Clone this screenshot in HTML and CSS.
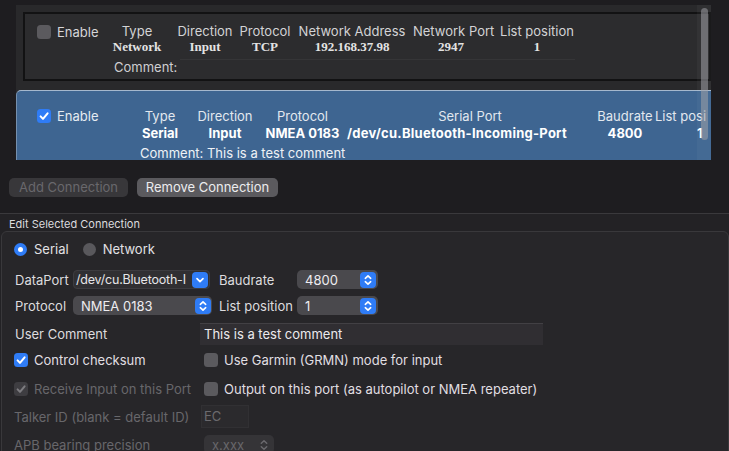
FILE: index.html
```html
<!DOCTYPE html>
<html>
<head>
<meta charset="utf-8">
<link rel="stylesheet" href="styles.css">
</head>
<body>
<div class="top">
  <div class="list">
    <div class="row row-net">
      <div class="line">
        <div class="enable en-net"><span class="cb cb-off"></span><span class="en-label">Enable</span></div>
        <div class="col n1"><div class="hdr">Type</div><div class="val">Network</div></div>
        <div class="col n2"><div class="hdr">Direction</div><div class="val">Input</div></div>
        <div class="col n3"><div class="hdr">Protocol</div><div class="val">TCP</div></div>
        <div class="col n4"><div class="hdr">Network Address</div><div class="val">192.168.37.98</div></div>
        <div class="col n5"><div class="hdr">Network Port</div><div class="val">2947</div></div>
        <div class="col n6"><div class="hdr">List position</div><div class="val">1</div></div>
      </div>
      <div class="underline"></div>
      <div class="comment net-comment">Comment:</div>
    </div>
    <div class="row row-sel">
      <div class="line">
        <div class="enable en-sel"><span class="cb cb-on"><svg viewBox="0 0 14 14" width="14" height="14"><path d="M3.6 7.4 L6 9.9 L10.6 4.3" fill="none" stroke="#fff" stroke-width="2" stroke-linecap="round" stroke-linejoin="round"/></svg></span><span class="en-label">Enable</span></div>
        <div class="col s1"><div class="hdr">Type</div><div class="val">Serial</div></div>
        <div class="col s2"><div class="hdr">Direction</div><div class="val">Input</div></div>
        <div class="col s3"><div class="hdr">Protocol</div><div class="val">NMEA 0183</div></div>
        <div class="col s4"><div class="hdr">Serial Port</div><div class="val">/dev/cu.Bluetooth-Incoming-Port</div></div>
        <div class="col s5"><div class="hdr">Baudrate</div><div class="val">4800</div></div>
        <div class="col s6"><div class="hdr">List posi</div><div class="val">1</div></div>
      </div>
      <div class="comment sel-comment">Comment: This is a test comment</div>
    </div>
    <div class="scroll-track"><div class="scroll-thumb"></div></div>
  </div>
</div>

<div class="buttons">
  <div class="btn btn-add">Add Connection</div>
  <div class="btn btn-remove">Remove Connection</div>
</div>

<div class="sep"></div>

<div class="section">
  <div class="section-title">Edit Selected Connection</div>
  <div class="box">
    <div class="radios">
      <span class="radio radio-on"></span><span class="radio-label">Serial</span>
      <span class="radio radio-off"></span><span class="radio-label">Network</span>
    </div>

    <div class="grid2">
      <div class="lbl">DataPort</div>
      <div class="combo">
        <div class="combo-field">/dev/cu.Bluetooth-I</div>
        <div class="blue-btn"><svg viewBox="0 0 16 16" width="16" height="16"><path d="M5 6.6 L8 9.6 L11 6.6" fill="none" stroke="#fff" stroke-width="1.7" stroke-linecap="round" stroke-linejoin="round"/></svg></div>
      </div>
      <div class="lbl">Baudrate</div>
      <div class="popup pop-small">
        <div class="pop-text">4800</div>
        <div class="blue-btn"><svg viewBox="0 0 16 16" width="16" height="16"><path d="M5.3 6.3 L8 3.8 L10.7 6.3 M5.3 9.7 L8 12.2 L10.7 9.7" fill="none" stroke="#fff" stroke-width="1.6" stroke-linecap="round" stroke-linejoin="round"/></svg></div>
      </div>

      <div class="lbl">Protocol</div>
      <div class="popup pop-proto">
        <div class="pop-text">NMEA 0183</div>
        <div class="blue-btn"><svg viewBox="0 0 16 16" width="16" height="16"><path d="M5.3 6.3 L8 3.8 L10.7 6.3 M5.3 9.7 L8 12.2 L10.7 9.7" fill="none" stroke="#fff" stroke-width="1.6" stroke-linecap="round" stroke-linejoin="round"/></svg></div>
      </div>
      <div class="lbl">List position</div>
      <div class="popup pop-small">
        <div class="pop-text">1</div>
        <div class="blue-btn"><svg viewBox="0 0 16 16" width="16" height="16"><path d="M5.3 6.3 L8 3.8 L10.7 6.3 M5.3 9.7 L8 12.2 L10.7 9.7" fill="none" stroke="#fff" stroke-width="1.6" stroke-linecap="round" stroke-linejoin="round"/></svg></div>
      </div>
    </div>

    <div class="comment-row">
      <div class="lbl lbl-wide">User Comment</div>
      <div class="text-field">This is a test comment</div>
    </div>

    <div class="crow crow-first">
      <div class="citem citem-left"><span class="cb cb-on"><svg viewBox="0 0 14 14" width="14" height="14"><path d="M3.6 7.4 L6 9.9 L10.6 4.3" fill="none" stroke="#fff" stroke-width="2" stroke-linecap="round" stroke-linejoin="round"/></svg></span><span class="clabel">Control checksum</span></div>
      <div class="citem"><span class="cb cb-off"></span><span class="clabel">Use Garmin (GRMN) mode for input</span></div>
    </div>

    <div class="crow crow-second">
      <div class="citem citem-left"><span class="cb cb-dis"><svg viewBox="0 0 14 14" width="14" height="14"><path d="M3.6 7.4 L6 9.9 L10.6 4.3" fill="none" stroke="#7d7c80" stroke-width="2" stroke-linecap="round" stroke-linejoin="round"/></svg></span><span class="clabel dim">Receive Input on this Port</span></div>
      <div class="citem"><span class="cb cb-off"></span><span class="clabel">Output on this port (as autopilot or NMEA repeater)</span></div>
    </div>

    <div class="talker-row">
      <div class="lbl dim lbl-talker">Talker ID (blank = default ID)</div>
      <div class="talker-field">EC</div>
    </div>

    <div class="apb-row">
      <div class="lbl dim lbl-apb">APB bearing precision</div>
      <div class="popup pop-dis">
        <div class="pop-text">x.xxx</div>
        <div class="dis-chev"><svg viewBox="0 0 16 16" width="16" height="16"><path d="M5.3 6.3 L8 3.8 L10.7 6.3 M5.3 9.7 L8 12.2 L10.7 9.7" fill="none" stroke="#6a696d" stroke-width="1.5" stroke-linecap="round" stroke-linejoin="round"/></svg></div>
      </div>
    </div>
  </div>
</div>
</body>
</html>
```

FILE: styles.css
```css
html, body {
  margin: 0;
  padding: 0;
}
body {
  width: 729px;
  height: 451px;
  overflow: hidden;
  background: #1e1d20;
  font-family: Inter, "Liberation Sans", sans-serif;
  font-size: 13px;
  color: #dddcdf;
}

.top {
  padding-top: 5px;
}
.list {
  position: relative;
  margin-left: 16px;
  width: 695px;
  height: 155px;
  background: #29292b;
  overflow: hidden;
}

.row-net {
  margin: 7px 0 0 7px;
  border: 2px solid #121213;
  background: #2c2c2e;
  padding: 10px 0 4px;
}
.line {
  display: flex;
}
.enable {
  display: flex;
  align-items: center;
  flex: none;
}
.en-net {
  width: 66px;
  padding-left: 12px;
  height: 15px;
}
.en-label {
  margin-left: 6px;
  color: #d6d6d8;
}
.col {
  flex: none;
  text-align: center;
  white-space: nowrap;
}
.row-net .hdr {
  line-height: 15px;
  color: #d3d3d5;
}
.row-net .val {
  line-height: 15px;
  font-family: "Liberation Serif", serif;
  font-weight: bold;
  color: #e3e3e3;
}
.n1 { width: 68px; }
.n2 { width: 68px; }
.n3 { width: 52px; }
.n4 { width: 122px; }
.n5 { width: 76px; }
.n6 { width: 96px; }

.underline {
  margin: 5px 0 0 155px;
  width: 395px;
  height: 1px;
  background: #353537;
}
.comment {
  white-space: nowrap;
}
.net-comment {
  margin-left: 89px;
  line-height: 15px;
  color: #cfcfd1;
}

.row-sel {
  margin-top: 9px;
  background: #3e6591;
  border-top: 1px solid #a5b8cd;
  border-left: 1px solid #7590ae;
  border-top-left-radius: 5px;
  padding-top: 17px;
  height: 60px;
}
.en-sel {
  width: 93px;
  padding-left: 20px;
  height: 16px;
}
.en-sel .en-label {
  color: #e6ecf2;
}
.row-sel .hdr {
  line-height: 16px;
  color: #e2e8ef;
}
.row-sel .val {
  margin-top: 1px;
  line-height: 16px;
  font-weight: 700;
  color: #ffffff;
}
.s1 { width: 60px; }
.s2 { width: 70px; }
.s3 { width: 85px; }
.s4 { width: 250px; }
.s4 .val { text-align: left; padding-left: 2px; letter-spacing: 0.25px; }
.s5 { width: 60px; }
.s6 { width: 40px; text-align: left; }
.s6 .val { padding-left: 42px; }
.sel-comment {
  margin: 4px 0 0 123px;
  line-height: 16px;
  color: #eef2f6;
}

.scroll-track {
  position: absolute;
  left: 681px;
  top: 0;
  width: 14px;
  height: 155px;
  background: rgba(255, 255, 255, 0.035);
}
.scroll-thumb {
  margin: 3px 0 0 4px;
  width: 7px;
  height: 132px;
  border-radius: 4px;
  background: rgba(160, 160, 166, 0.55);
}

.cb {
  flex: none;
  width: 14px;
  height: 14px;
  border-radius: 3.5px;
  box-sizing: border-box;
  display: inline-flex;
}
.cb svg { display: block; }
.cb-off {
  background: #5b5a5e;
}
.cb-on {
  background: #2f7cf6;
}
.cb-dis {
  background: #3e3d41;
}

.buttons {
  display: flex;
  gap: 9px;
  margin: 18px 0 0 9px;
}
.btn {
  height: 19px;
  line-height: 19px;
  border-radius: 5px;
  text-align: center;
  font-size: 13px;
}
.btn-add {
  width: 119px;
  background: #38373a;
  color: #69686c;
}
.btn-remove {
  width: 141px;
  background: #5b5a5e;
  color: #ececee;
}

.sep {
  margin-top: 16px;
  height: 1px;
  background: #3a393c;
}

.section {
  background: #232225;
}
.section-title {
  padding: 3px 0 0 9px;
  font-size: 11px;
  line-height: 14px;
  color: #dcdbde;
}
.box {
  margin-left: 1px;
  border: 1px solid #39383b;
  border-radius: 6px;
  background: #272629;
  padding: 9px 0 30px 12px;
}

.radios {
  display: flex;
  align-items: center;
  height: 16px;
}
.radio {
  flex: none;
  width: 13px;
  height: 13px;
  border-radius: 50%;
  box-sizing: border-box;
}
.radio-on {
  background: #2f7cf6;
  border: 4px solid #2f7cf6;
}
.radio-on::after {
  content: "";
  display: block;
  width: 5px;
  height: 5px;
  border-radius: 50%;
  background: #fff;
}
.radio-off {
  background: #59585c;
  margin-left: 14px;
}
.radio-label {
  margin-left: 7px;
  color: #e2e1e4;
}

.grid2 {
  display: grid;
  grid-template-columns: 59px 145px 79px 81px;
  grid-auto-rows: 19px;
  row-gap: 7px;
  margin-top: 13px;
  align-items: center;
}
.lbl {
  padding-left: 1px;
  color: #dddcdf;
  white-space: nowrap;
}
.dim {
  color: #68676b;
}

.combo {
  width: 137px;
  height: 19px;
  display: flex;
  align-items: center;
  box-sizing: border-box;
  background: #302f32;
  border: 1px solid #3d3c40;
  border-radius: 4px;
}
.combo-field {
  flex: 1;
  min-width: 0;
  white-space: nowrap;
  padding-left: 2px;
  font-size: 12.5px;
  letter-spacing: -0.2px;
  color: #e6e5e8;
  line-height: 17px;
}
.blue-btn {
  flex: none;
  width: 16px;
  height: 16px;
  border-radius: 4px;
  background: #2f7cf6;
  margin-right: 1px;
}
.blue-btn svg { display: block; }

.popup {
  height: 19px;
  display: flex;
  align-items: center;
  border-radius: 5px;
  background: #4a494d;
  box-sizing: border-box;
  padding-left: 8px;
}
.pop-text {
  flex: 1;
  color: #eeedf0;
  white-space: nowrap;
}
.pop-small { width: 81px; }
.pop-small .blue-btn { margin-right: 2px; }
.pop-proto { width: 139px; }
.pop-proto .blue-btn { margin-right: 1px; }

.comment-row {
  display: flex;
  align-items: center;
  margin-top: 8px;
}
.lbl-wide {
  width: 185px;
}
.text-field {
  width: 343px;
  height: 22px;
  box-sizing: border-box;
  line-height: 21px;
  padding-left: 4px;
  background: #302e32;
  border-top: 1px solid #424044;
  color: #ebeaed;
}

.crow {
  display: flex;
  align-items: center;
  height: 16px;
}
.crow-first { margin-top: 7px; }
.crow-second { margin-top: 13px; }
.citem {
  display: flex;
  align-items: center;
  white-space: nowrap;
}
.citem-left {
  width: 190px;
}
.clabel {
  margin-left: 6px;
  color: #e0dfe2;
}
.clabel.dim {
  color: #68676b;
}

.talker-row {
  display: flex;
  align-items: center;
  margin-top: 8px;
}
.lbl-talker {
  width: 187px;
  padding-left: 0;
}
.talker-field {
  width: 48px;
  height: 23px;
  box-sizing: border-box;
  background: #2b2a2d;
  border: 1px solid #313033;
  line-height: 21px;
  padding-left: 2px;
  color: #6b6a6e;
}

.apb-row {
  display: flex;
  align-items: center;
  margin-top: 7px;
}
.lbl-apb {
  width: 190px;
  padding-left: 0;
}
.pop-dis {
  width: 70px;
  background: #353437;
}
.pop-dis .pop-text {
  color: #67666a;
}
.dis-chev {
  flex: none;
  width: 16px;
  height: 16px;
  margin-right: 2px;
}
.dis-chev svg { display: block; }
```
